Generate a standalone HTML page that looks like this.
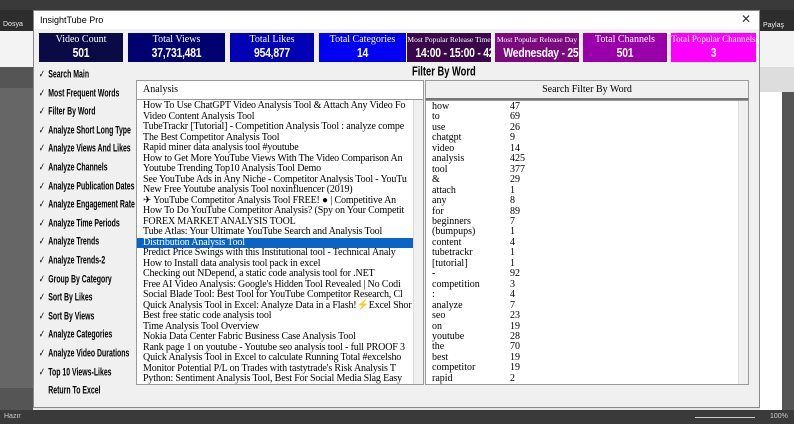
<!DOCTYPE html>
<html><head><meta charset="utf-8"><style>
*{margin:0;padding:0;box-sizing:border-box}
body{width:794px;height:424px;overflow:hidden;position:relative;background:#e6e6e6;font-family:"Liberation Sans",sans-serif}
.abs{position:absolute}
.dlg{left:33px;top:10px;width:727px;height:398px;background:#f0f0f0;border:1px solid #888}
.tb{left:0;top:0;width:725px;height:18px;background:#fff;font-size:9px;padding:4px 6px;color:#000}
.box{position:absolute;top:22px;height:29px;color:#fff;text-align:center;font-family:"Liberation Serif",serif;font-size:10px;line-height:11px;padding-top:1px;white-space:nowrap;overflow:hidden}
.box b{display:block;font-family:"Liberation Sans",sans-serif;font-weight:bold;font-size:13px;line-height:16px;transform:scaleX(0.8);letter-spacing:-0.3px}
.menu{position:absolute;left:5px;font-family:"Liberation Sans",sans-serif;font-weight:bold;font-size:9px;color:#000;transform:scale(0.77,1.2);transform-origin:left center;white-space:nowrap}
.menu span{display:inline-block;width:12px;font-weight:normal}
.list{position:absolute;background:#fff;border:1px solid #999;font-family:"Liberation Serif",serif;font-size:10px;color:#000;overflow:hidden;white-space:nowrap}
.sb{position:absolute;top:0;right:0;width:10px;bottom:0;background:#f0f0f0;border-left:1px solid #ddd}
</style></head><body>
<div class="abs" style="left:0;top:0;width:794px;height:10px;background:#3a3a3a"></div>
<div class="abs" style="left:0;top:10px;width:794px;height:57px;background:#f3f3f3"></div>
<div class="abs" style="left:0;top:10px;width:33px;height:21px;background:#2d2d2d"></div>
<div class="abs" style="left:3px;top:21px;font-size:7px;color:#eee">Dosya</div>
<div class="abs" style="left:760px;top:10px;width:34px;height:21px;background:#2d2d2d"></div>
<div class="abs" style="left:763px;top:22px;font-size:7px;color:#eee">Paylaş</div>
<div class="abs" style="left:0;top:67px;width:33px;height:343px;background:#555"></div>
<div class="abs" style="left:0;top:88px;width:33px;height:300px;background:#666"></div>
<div class="abs" style="left:760px;top:67px;width:34px;height:343px;background:#fff"></div>
<div class="abs" style="left:760px;top:67px;width:34px;height:25px;background:#ddd"></div>
<div class="abs" style="left:782px;top:92px;width:12px;height:318px;background:#555"></div>
<div class="abs" style="left:0;top:410px;width:794px;height:14px;background:#3a3a3a"></div>
<div class="abs" style="left:4px;top:413px;font-size:7px;color:#ccc">Hazır</div>
<div class="abs" style="left:770px;top:413px;font-size:7px;color:#ccc">100%</div>
<div class="abs" style="left:695px;top:417px;width:60px;height:1px;background:#ccc"></div>

<div class="abs dlg">
<div class="abs tb">InsightTube Pro<span style="position:absolute;right:8px;top:1px;font-size:12px;color:#333">✕</span></div>
<div class="box" style="left:5px;width:84px;background:#0a0a45">Video Count<b>501</b></div>
<div class="box" style="left:94px;width:97px;background:#000070">Total Views<b>37,731,481</b></div>
<div class="box" style="left:196px;width:84px;background:#0000b4">Total Likes<b>954,877</b></div>
<div class="box" style="left:285px;width:87px;background:#0000f0">Total Categories<b>14</b></div>
<div class="box" style="left:373px;width:84px;background:#38084a;font-size:7.5px">Most Popular Release Time<b>14:00 - 15:00 - 42</b></div>
<div class="box" style="left:461px;width:84px;background:#7a0a7e;font-size:7.5px">Most Popular Release Day<b>Wednesday - 25</b></div>
<div class="box" style="left:549px;width:84px;background:#9a00aa">Total Channels<b>501</b></div>
<div class="box" style="left:637px;width:85px;background:#ff00ff;font-size:9px">Total Popular Channels<b>3</b></div>

<div class="menu" style="top:58px"><span>✓</span>Search Main</div>
<div class="menu" style="top:77px"><span>✓</span>Most Frequent Words</div>
<div class="menu" style="top:95px"><span>✓</span>Filter By Word</div>
<div class="menu" style="top:114px"><span>✓</span>Analyze Short Long Type</div>
<div class="menu" style="top:132px"><span>✓</span>Analyze Views And Likes</div>
<div class="menu" style="top:151px"><span>✓</span>Analyze Channels</div>
<div class="menu" style="top:170px"><span>✓</span>Analyze Publication Dates</div>
<div class="menu" style="top:188px"><span>✓</span>Analyze Engagement Rate</div>
<div class="menu" style="top:207px"><span>✓</span>Analyze Time Periods</div>
<div class="menu" style="top:225px"><span>✓</span>Analyze Trends</div>
<div class="menu" style="top:244px"><span>✓</span>Analyze Trends-2</div>
<div class="menu" style="top:263px"><span>✓</span>Group By Category</div>
<div class="menu" style="top:281px"><span>✓</span>Sort By Likes</div>
<div class="menu" style="top:300px"><span>✓</span>Sort By Views</div>
<div class="menu" style="top:318px"><span>✓</span>Analyze Categories</div>
<div class="menu" style="top:337px"><span>✓</span>Analyze Video Durations</div>
<div class="menu" style="top:356px"><span>✓</span>Top 10 Views-Likes</div>
<div class="menu" style="top:374px"><span></span>Return To Excel</div>

<div class="abs" style="left:378px;top:55px;font-family:'Liberation Sans',sans-serif;font-weight:bold;font-size:11px;transform:scale(0.85,1.2);transform-origin:left center">Filter By Word</div>

<div class="list" style="left:102px;top:69px;width:288px;height:20px;padding:3px 6px;font-size:10px">Analysis</div>
<div class="list" style="left:102px;top:88px;width:288px;height:286px;line-height:10.5px;padding:1px 0 0 6px;letter-spacing:-0.15px">
<div>How To Use ChatGPT Video Analysis Tool &amp; Attach Any Video Fo</div>
<div>Video Content Analysis Tool</div>
<div>TubeTrackr [Tutorial] - Competition Analysis Tool : analyze compe</div>
<div>The Best Competitor Analysis Tool</div>
<div>Rapid miner data analysis tool #youtube</div>
<div>How to Get More YouTube Views With The Video Comparison An</div>
<div>Youtube Trending Top10 Analysis Tool Demo</div>
<div>See YouTube Ads in Any Niche - Competitor Analysis Tool - YouTu</div>
<div>New  Free Youtube analysis Tool noxinfluencer (2019)</div>
<div>✈ YouTube Competitor Analysis Tool FREE! ● | Competitive An</div>
<div>How To Do YouTube Competitor Analysis? (Spy on Your Competit</div>
<div>FOREX MARKET ANALYSIS TOOL</div>
<div>Tube Atlas: Your Ultimate YouTube Search and Analysis Tool</div>
<div style="background:#0a64c8;color:#fff;margin-left:-6px;padding-left:6px;margin-right:10px">Distribution Analysis Tool</div>
<div>Predict Price Swings with this Institutional tool - Technical Analy</div>
<div>How to Install data analysis tool pack in excel</div>
<div>Checking out NDepend, a static code analysis tool for .NET</div>
<div>Free AI Video Analysis: Google's Hidden Tool Revealed | No Codi</div>
<div>Social Blade Tool: Best Tool for YouTube Competitor Research, Cl</div>
<div>Quick Analysis Tool in Excel: Analyze Data in a Flash!⚡Excel Shor</div>
<div>Best free static code analysis tool</div>
<div>Time Analysis Tool Overview</div>
<div>Nokia Data Center Fabric Business Case Analysis Tool</div>
<div>Rank page 1 on youtube - Youtube seo analysis tool - full PROOF 3</div>
<div>Quick Analysis Tool in Excel to calculate Running Total #excelsho</div>
<div>Monitor Potential P/L on Trades with tastytrade's Risk Analysis T</div>
<div>Python:  Sentiment Analysis Tool, Best For Social Media Slag Easy</div>
<div class="sb"></div>
</div>

<div class="abs" style="left:391px;top:69px;width:324px;height:20px;background:#f0f0f0;border:1px solid #999;border-bottom:2px solid #777;text-align:center;font-family:'Liberation Serif',serif;font-size:10px;line-height:18px">Search Filter By Word</div>
<div class="list" style="left:391px;top:89px;width:324px;height:285px;line-height:10.46px;padding:1px 0 0 6px">
<div style="display:grid;grid-template-columns:78px 40px">
<div>how</div><div>47</div><div>to</div><div>69</div><div>use</div><div>26</div><div>chatgpt</div><div>9</div><div>video</div><div>14</div><div>analysis</div><div>425</div><div>tool</div><div>377</div><div>&amp;</div><div>29</div><div>attach</div><div>1</div><div>any</div><div>8</div><div>for</div><div>89</div><div>beginners</div><div>7</div><div>(bumpups)</div><div>1</div><div>content</div><div>4</div><div>tubetrackr</div><div>1</div><div>[tutorial]</div><div>1</div><div>-</div><div>92</div><div>competition</div><div>3</div><div>:</div><div>4</div><div>analyze</div><div>7</div><div>seo</div><div>23</div><div>on</div><div>19</div><div>youtube</div><div>28</div><div>the</div><div>70</div><div>best</div><div>19</div><div>competitor</div><div>19</div><div>rapid</div><div>2</div>
</div>
<div class="sb"></div>
</div>
</div>
</body></html>
